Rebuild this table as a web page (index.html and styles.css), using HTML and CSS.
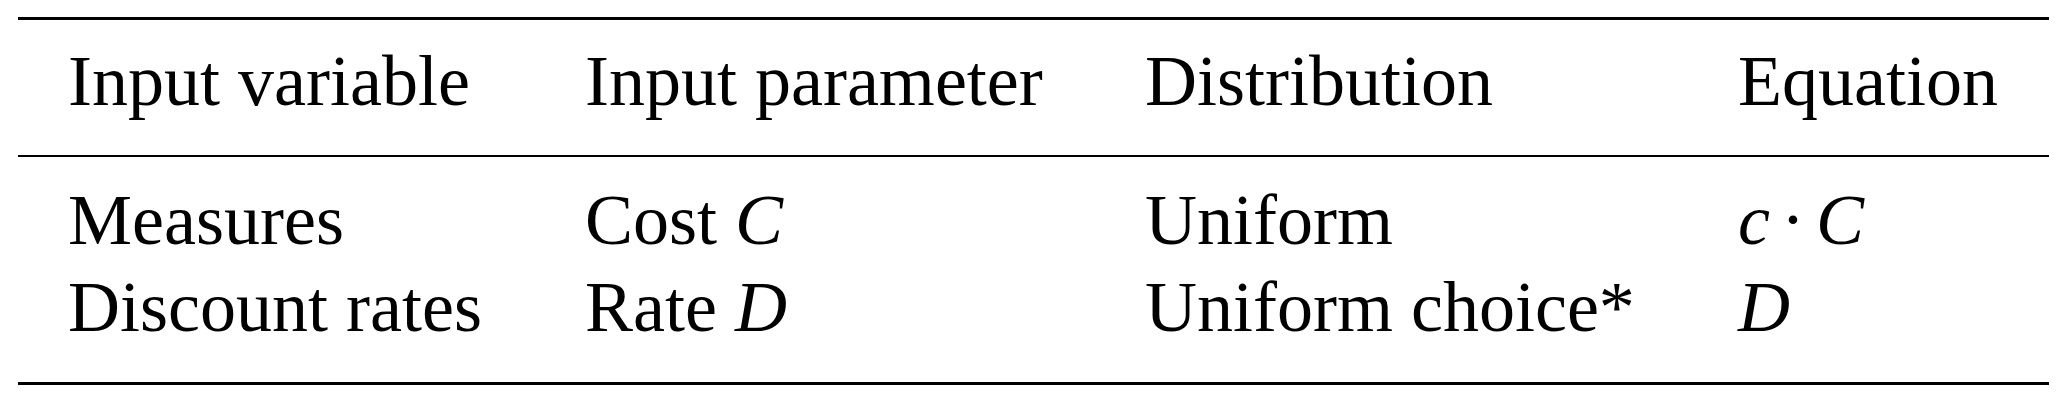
FILE: index.html
```html
<!DOCTYPE html>
<html>
<head>
<meta charset="utf-8">
<link rel="stylesheet" href="styles.css">
</head>
<body>
<div class="tbl">
  <div class="head grid">
    <div>Input variable</div>
    <div>Input parameter</div>
    <div>Distribution</div>
    <div>Equation</div>
  </div>
  <div class="body">
    <div class="grid">
      <div>Measures</div>
      <div>Cost <i>C</i></div>
      <div>Uniform</div>
      <div><i>c</i><span class="op">·</span><i>C</i></div>
    </div>
    <div class="grid">
      <div>Discount rates</div>
      <div>Rate <i>D</i></div>
      <div>Uniform choice*</div>
      <div><i>D</i></div>
    </div>
  </div>
</div>
</body>
</html>
```

FILE: styles.css
```css
html, body {
  margin: 0;
  padding: 0;
  background: #ffffff;
}
body {
  width: 2067px;
  height: 405px;
  overflow: hidden;
}
.tbl {
  margin: 17px 0 0 17.5px;
  width: 2031.5px;
  font-family: "Liberation Serif", "Times New Roman", serif;
  font-size: 72px;
  color: #000;
}
.grid {
  display: grid;
  grid-template-columns: 517px 560px 593px auto;
  padding: 0 51px 0 50.5px;
  white-space: nowrap;
}
.head {
  border-top: 3px solid #000;
  border-bottom: 2px solid #000;
  line-height: 80px;
  padding-top: 20.7px;
  padding-bottom: 34.8px;
}
.body {
  border-bottom: 3px solid #000;
  line-height: 87px;
  padding-top: 19.7px;
  padding-bottom: 31.1px;
}
i {
  font-style: italic;
}
.op {
  margin: 0 11px;
}
```
